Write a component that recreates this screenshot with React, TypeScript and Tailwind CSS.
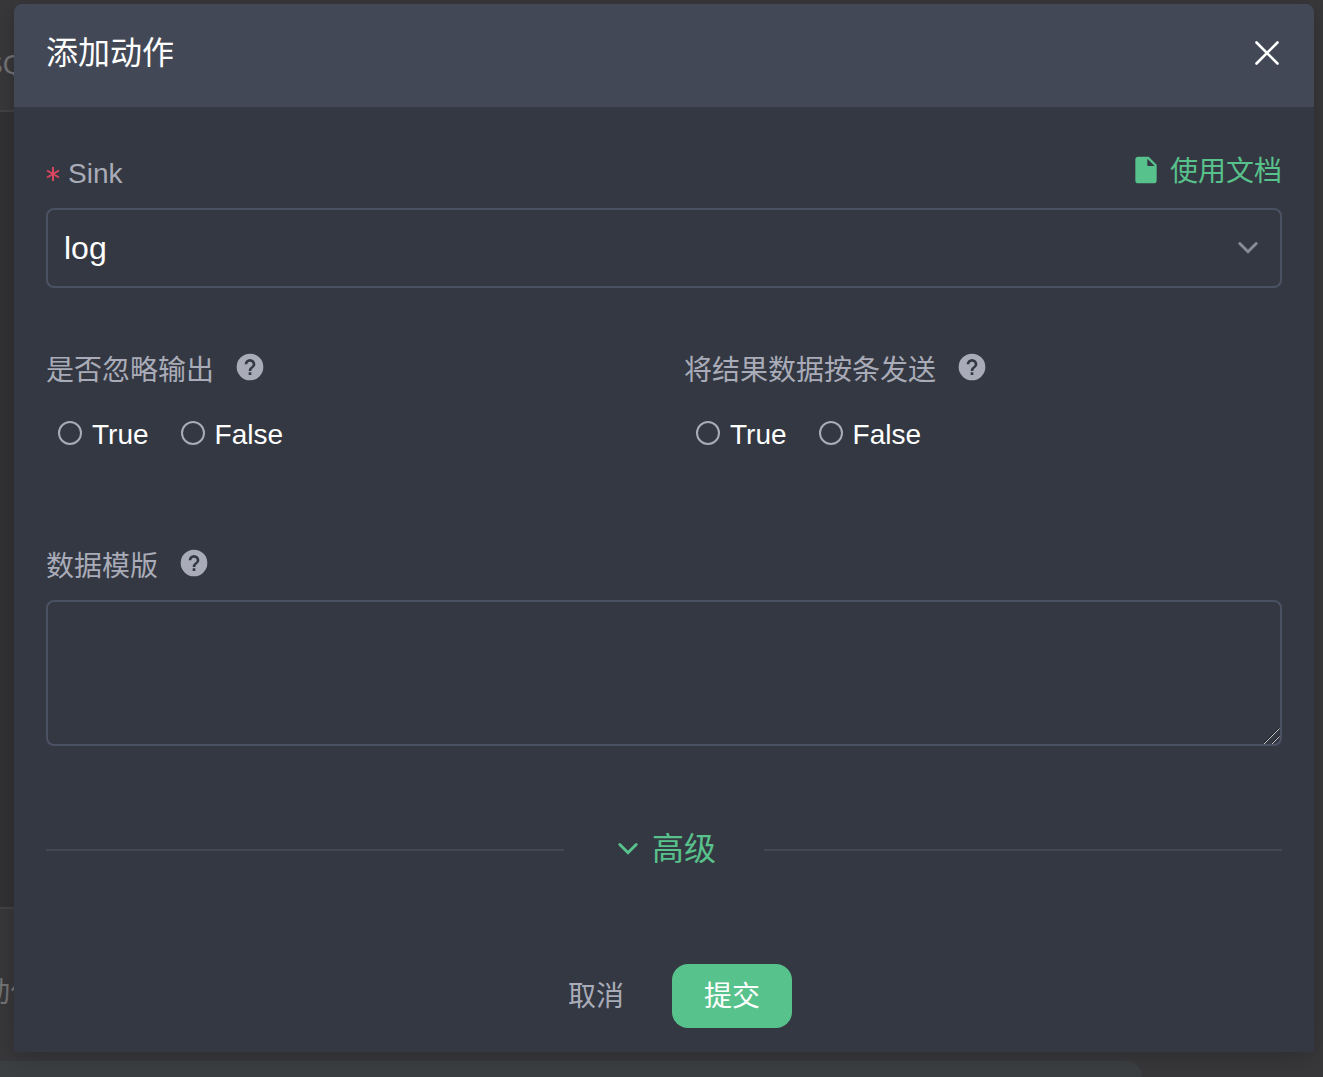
import { useState } from 'react';
import { MdInsertDriveFile } from 'react-icons/md';

function ChevronDown({ className = '' }: { className?: string }) {
  return (
    <svg viewBox="0 0 32 32" className={`w-8 h-8 ${className}`} fill="none" stroke="currentColor" strokeWidth="3" strokeLinecap="round" aria-hidden="true">
      <path d="M7.8 11.500l8.200 8.200 8.200-8.200" />
    </svg>
  );
}

function HelpIcon() {
  return (
    <svg viewBox="0 0 24 24" className="w-8 h-8 mb-2" fill="currentColor" fillRule="evenodd" aria-hidden="true">
      <path d="M12 2a10 10 0 1 0 0 20 10 10 0 0 0 0-20zM11 16h2v2h-2zM12 6a4 4 0 0 0-4 4h2a2 2 0 1 1 4 0c0 2-3 1.900-3 5h2c0-2.200 3-2.500 3-5a4 4 0 0 0-4-4z" />
    </svg>
  );
}

function BooleanField({ name, label }: { name: string; label: string }) {
  const [value, setValue] = useState('');

  return (
    <fieldset>
      <legend className="flex h-10 items-center gap-5 pt-1 text-[28px] text-[#a9acb8]">
        {label}
        <HelpIcon />
      </legend>
      <div className="mt-6 flex h-10 items-center gap-8 pl-3">
        {['True', 'False'].map((option) => (
          <label key={option} className="flex items-center gap-[10px] text-[28px] text-white">
            <input
              type="radio"
              name={name}
              value={option}
              checked={value === option}
              onChange={() => setValue(option)}
              className="h-6 w-6 appearance-none rounded-full border-2 border-[#a9acb8] checked:border-8 checked:border-[#58c28c]"
            />
            <span className="pt-1">{option}</span>
          </label>
        ))}
      </div>
    </fieldset>
  );
}

function PageBehind() {
  return (
    <div className="flex min-h-screen flex-col overflow-hidden bg-[#38383b] text-[28px] text-[#737376]">
      <div className="mr-10 flex h-28 items-center border-b-2 border-[#434346]">
        <span className="-ml-4 mt-5">SQL</span>
      </div>
      <div className="mr-10 grow border-b-2 border-[#434346] bg-[#323234]" />
      <div className="flex h-[152px] items-center">
        <span className="-ml-[18px] mt-4">动作</span>
      </div>
      <div className="mr-[181px] h-4 rounded-tr-2xl bg-[#3b3f42]" />
    </div>
  );
}

export default function App() {
  const [sink, setSink] = useState('log');
  const [template, setTemplate] = useState('');

  return (
    <div className="relative font-['Liberation_Sans','Noto_Sans_CJK_SC',sans-serif]">
      <PageBehind />
      <div className="absolute inset-0 pt-1 pr-[9px] pl-[14px]">
        <div role="dialog" aria-labelledby="dialog-title" className="rounded-t-lg bg-[#343842] shadow-[0_4px_24px_rgba(0,0,0,0.2)]">
          <header className="flex h-[103px] items-center justify-between rounded-t-lg bg-[#434856] px-8 pb-[6px]">
            <h2 id="dialog-title" className="text-[32px] text-white">添加动作</h2>
            <button type="button" aria-label="关闭" className="text-white">
              <svg viewBox="0 0 30 30" className="h-[30px] w-[30px]" stroke="currentColor" strokeWidth="2.6" strokeLinecap="round">
                <path d="M4.500 4.500l21 21M25.500 4.500l-21 21" />
              </svg>
            </button>
          </header>

          <form className="px-8 pt-[45px] pb-6" onSubmit={(e) => e.preventDefault()}>
            <div className="flex h-10 items-center justify-between text-[28px]">
              <label htmlFor="sink" className="flex items-center gap-2 pt-1 text-[#a9acb8]">
                <svg viewBox="0 0 14 14" className="h-[14px] w-[14px] text-[#d8465f]" stroke="currentColor" strokeWidth="2" aria-hidden="true">
                  <path d="M7 0v14M1 3.500l12 7M13 3.500l-12 7" />
                </svg>
                Sink
              </label>
              <a href="#docs" className="flex items-center gap-2 text-[#58c28c]">
                <MdInsertDriveFile className="mb-1 h-8 w-8" />
                使用文档
              </a>
            </div>
            <div className="relative mt-4">
              <select
                id="sink"
                value={sink}
                onChange={(e) => setSink(e.target.value)}
                className="h-20 w-full appearance-none rounded-lg border-2 border-[#4a5263] bg-transparent px-4 text-[32px] text-white"
              >
                <option value="log">log</option>
              </select>
              <ChevronDown className="pointer-events-none absolute top-6 right-[18px] text-[#888b98]" />
            </div>

            <div className="mt-[61px] grid grid-cols-2 gap-10">
              <BooleanField name="omitIfEmpty" label="是否忽略输出" />
              <BooleanField name="sendSingle" label="将结果数据按条发送" />
            </div>

            <label htmlFor="template" className="mt-[92px] flex h-10 items-center gap-5 pt-1 text-[28px] text-[#a9acb8]">
              数据模版
              <HelpIcon />
            </label>
            <div className="relative mt-[15px]">
              <textarea
                id="template"
                value={template}
                onChange={(e) => setTemplate(e.target.value)}
                className="block h-[146px] w-full resize-none rounded-lg border-2 border-[#4a5263] bg-transparent px-4 py-3 text-[28px] text-white"
              />
              <svg viewBox="0 0 16 16" className="pointer-events-none absolute right-[2px] bottom-[2px] h-4 w-4" aria-hidden="true">
                <path d="M0 15L15 0M8 15l7-7" stroke="#1b1c21" />
                <path d="M0 16L15.500 .5M8 16l7.500-7.500" stroke="#c9cace" />
              </svg>
            </div>

            <div className="mt-20 flex h-12 items-center gap-12">
              <div className="h-[2px] grow bg-[#434856]" />
              <button type="button" className="flex items-center gap-2 pb-[3px] text-[32px] text-[#58c28c]">
                <ChevronDown />
                高级
              </button>
              <div className="h-[2px] grow bg-[#434856]" />
            </div>

            <div className="mt-[90px] flex justify-center gap-4 text-[28px]">
              <button type="button" className="h-16 px-8 pt-[2px] text-[#a9acb8]">取消</button>
              <button type="submit" className="h-16 rounded-2xl bg-[#58c28c] px-8 pt-[2px] text-white">提交</button>
            </div>
          </form>
        </div>
      </div>
    </div>
  );
}
